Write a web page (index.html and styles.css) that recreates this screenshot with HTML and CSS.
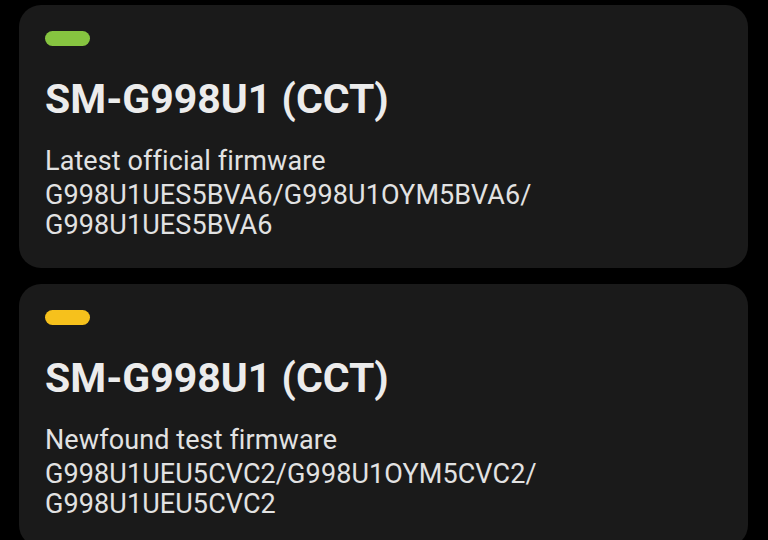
FILE: index.html
```html
<!DOCTYPE html>
<html>
<head>
<meta charset="utf-8">
<link rel="stylesheet" href="styles.css">
</head>
<body>
<div class="list">
  <div class="card">
    <div class="pill pill-green"></div>
    <div class="title">SM-G998U1 (CCT)</div>
    <div class="sub">Latest official firmware</div>
    <div class="fw">G998U1UES5BVA6/G998U1OYM5BVA6/<br>G998U1UES5BVA6</div>
  </div>
  <div class="card">
    <div class="pill pill-yellow"></div>
    <div class="title">SM-G998U1 (CCT)</div>
    <div class="sub">Newfound test firmware</div>
    <div class="fw">G998U1UEU5CVC2/G998U1OYM5CVC2/<br>G998U1UEU5CVC2</div>
  </div>
</div>
</body>
</html>
```
FILE: styles.css
```css
html, body {
  margin: 0;
  padding: 0;
  background: #000;
  width: 768px;
  height: 540px;
  overflow: hidden;
}
.list {
  display: flex;
  flex-direction: column;
  gap: 16px;
  padding: 5px 20px 0 19px;
  font-family: Roboto, "Noto Sans", sans-serif;
}
.card {
  background: #1a1a1a;
  border-radius: 22px;
  padding: 26px 26px 28px 26px;
}
.pill {
  width: 45px;
  height: 15px;
  border-radius: 8px;
}
.pill-green { background: #86c440; }
.pill-yellow { background: #f6c11c; }
.title {
  margin-top: 28px;
  font-size: 41px;
  line-height: 50px;
  font-weight: 700;
  color: #ececec;
}
.sub {
  margin-top: 22px;
  margin-bottom: 4px;
  font-size: 27px;
  line-height: 30px;
  letter-spacing: 0.1px;
  color: #e2e2e2;
}
.fw {
  font-size: 27px;
  line-height: 30px;
  letter-spacing: 0.1px;
  color: #e2e2e2;
}
```
